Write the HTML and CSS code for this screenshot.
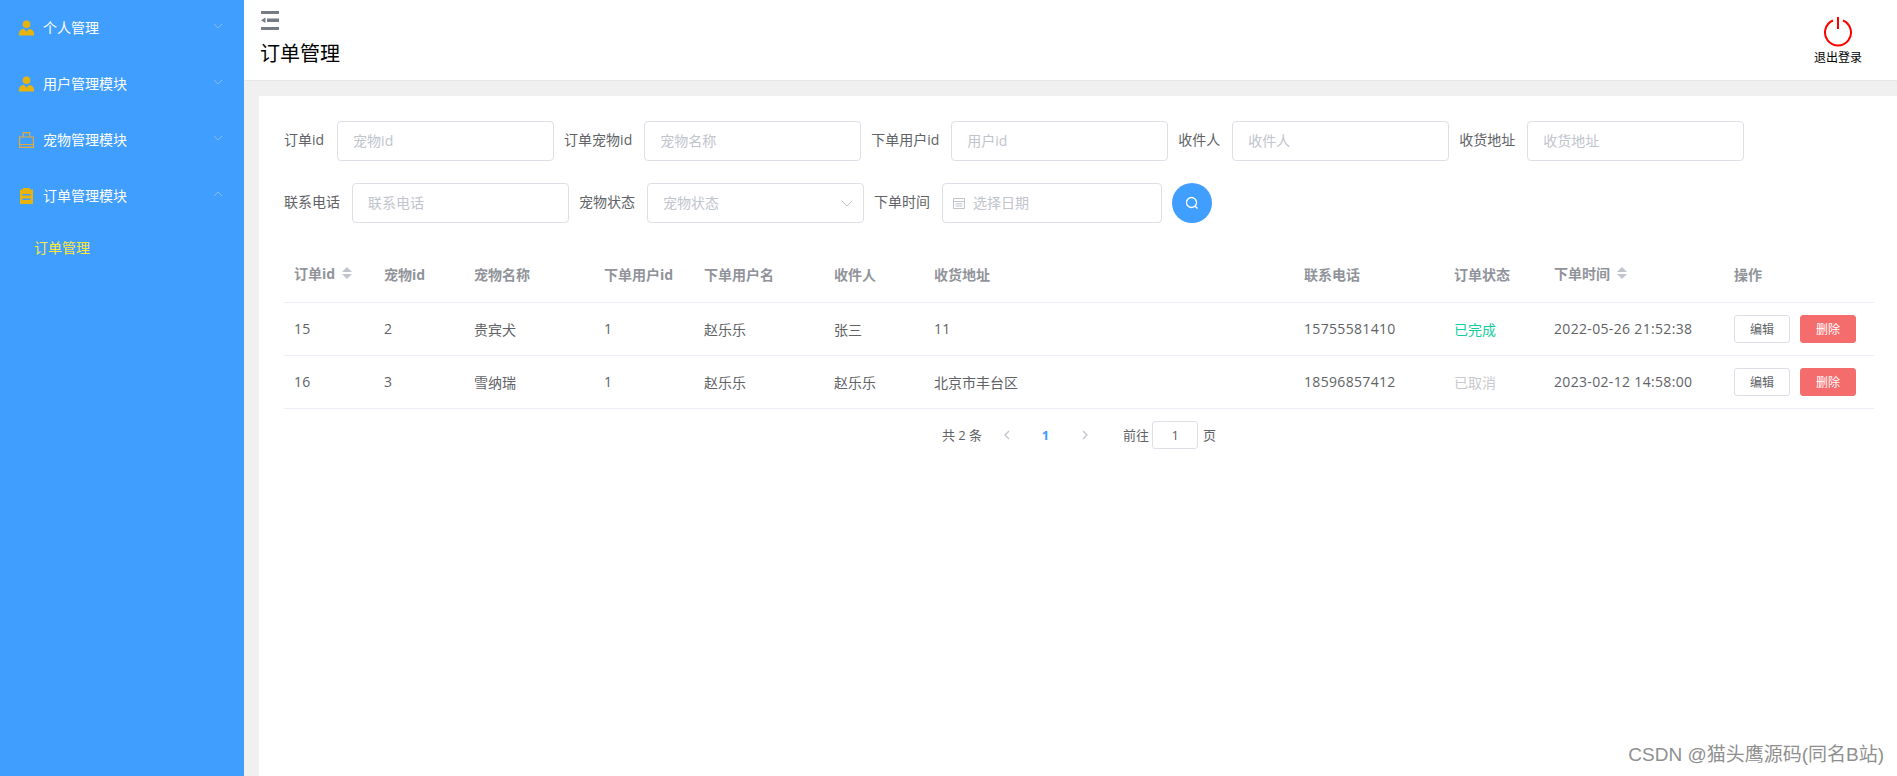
FILE: index.html
```html
<!DOCTYPE html>
<html lang="zh-CN">
<head>
<meta charset="utf-8">
<title>订单管理</title>
<link rel="stylesheet" href="styles.css">
</head>
<body>
<div class="app">
  <aside class="sidebar">
    <div class="menu-item">
      <svg class="menu-icon" viewBox="0 0 15 15"><circle cx="7.5" cy="3.8" r="3.8"/><path d="M0 15v-2.5C0 10 2.5 8.7 4.6 8.2L7.5 11l2.9-2.8c2.100.5 4.600 1.800 4.600 4.300V15z"/></svg>
      <span class="menu-text">个人管理</span>
      <svg class="menu-arrow" viewBox="0 0 10 6"><path d="M1 1l4 4 4-4"/></svg>
    </div>
    <div class="menu-item">
      <svg class="menu-icon" viewBox="0 0 15 15"><circle cx="7.5" cy="3.8" r="3.8"/><path d="M0 15v-2.500C0 10 2.500 8.700 4.600 8.200L7.500 11l2.900-2.800c2.100.5 4.600 1.800 4.600 4.300V15z"/></svg>
      <span class="menu-text">用户管理模块</span>
      <svg class="menu-arrow" viewBox="0 0 10 6"><path d="M1 1l4 4 4-4"/></svg>
    </div>
    <div class="menu-item">
      <svg class="menu-icon menu-icon-line" viewBox="0 0 15 16"><path d="M.6 5h13.800v10.400H.6zM.6 12.500h13.800M4.300 5V.6h6.400V5"/></svg>
      <span class="menu-text">宠物管理模块</span>
      <svg class="menu-arrow" viewBox="0 0 10 6"><path d="M1 1l4 4 4-4"/></svg>
    </div>
    <div class="menu-item">
      <svg class="menu-icon" viewBox="0 0 15 16"><path fill-rule="evenodd" d="M1 1.500h3V0h7v1.500h3V16H1zM3.500 6v1.500h8V6zm0 4.500V12h8v-1.500z"/></svg>
      <span class="menu-text">订单管理模块</span>
      <svg class="menu-arrow" viewBox="0 0 10 6"><path d="M1 5l4-4 4 4"/></svg>
    </div>
    <div class="submenu-item">订单管理</div>
  </aside>
  <div class="content">
    <header class="topbar">
      <div class="topbar-left">
        <svg class="collapse-icon" viewBox="0 0 18 19"><path d="M0 0h18v3H0zM6 7.500h12v3.500H6zM0 16h18v3H0zM4.500 6.500v5.500L0 9.300z"/></svg>
        <h1 class="page-title">订单管理</h1>
      </div>
      <div class="logout">
        <svg class="power-icon" viewBox="0 0 30 31"><path d="M10 4.500A13 13 0 1 0 20 4.500M15 1v12"/></svg>
        <span>退出登录</span>
      </div>
    </header>
    <main class="main">
      <section class="card">
        <form class="filter">
          <div class="field"><label class="field-label label-id">订单id</label><div class="control"><span class="ph">宠物id</span></div></div>
          <div class="field"><label class="field-label">订单宠物id</label><div class="control"><span class="ph">宠物名称</span></div></div>
          <div class="field"><label class="field-label">下单用户id</label><div class="control"><span class="ph">用户id</span></div></div>
          <div class="field"><label class="field-label">收件人</label><div class="control"><span class="ph">收件人</span></div></div>
          <div class="field"><label class="field-label">收货地址</label><div class="control"><span class="ph">收货地址</span></div></div>
          <div class="field"><label class="field-label">联系电话</label><div class="control"><span class="ph">联系电话</span></div></div>
          <div class="field"><label class="field-label">宠物状态</label><div class="control control-select"><span class="ph">宠物状态</span><svg class="select-arrow" viewBox="0 0 12 7"><path d="M1 1l5 5 5-5"/></svg></div></div>
          <div class="field"><label class="field-label">下单时间</label><div class="control control-date"><svg class="date-icon" viewBox="0 0 12 12"><path d="M.5 1.500h11v10H.5zM.5 4.500h11M2.500 6.800h7M2.500 9h7"/></svg><span class="ph">选择日期</span></div></div>
          <div class="search-btn"><svg viewBox="0 0 14 14"><circle cx="6.500" cy="6.500" r="5"/><path d="M10.200 10.200L12.500 12.500"/></svg></div>
        </form>
        <table class="orders">
          <colgroup>
            <col class="c90"><col class="c90"><col class="c130"><col class="c100"><col class="c130"><col class="c100"><col class="c370"><col class="c150"><col class="c100"><col class="c180"><col class="c150">
          </colgroup>
          <thead>
            <tr>
              <th><div class="sort-head">订单id<span class="caret"><i class="up"></i><i class="down"></i></span></div></th>
              <th>宠物id</th><th>宠物名称</th><th>下单用户id</th><th>下单用户名</th><th>收件人</th><th>收货地址</th><th>联系电话</th><th>订单状态</th>
              <th><div class="sort-head">下单时间<span class="caret"><i class="up"></i><i class="down"></i></span></div></th>
              <th>操作</th>
            </tr>
          </thead>
          <tbody>
            <tr>
              <td class="num">15</td><td class="num">2</td><td>贵宾犬</td><td class="num">1</td><td>赵乐乐</td><td>张三</td><td class="num">11</td><td class="num">15755581410</td><td class="done">已完成</td><td class="num">2022-05-26 21:52:38</td>
              <td><div class="ops"><span class="btn">编辑</span><span class="btn btn-danger">删除</span></div></td>
            </tr>
            <tr>
              <td class="num">16</td><td class="num">3</td><td>雪纳瑞</td><td class="num">1</td><td>赵乐乐</td><td>赵乐乐</td><td>北京市丰台区</td><td class="num">18596857412</td><td class="cancel">已取消</td><td class="num">2023-02-12 14:58:00</td>
              <td><div class="ops"><span class="btn">编辑</span><span class="btn btn-danger">删除</span></div></td>
            </tr>
          </tbody>
        </table>
        <nav class="pager">
          <span class="total">共 2 条</span>
          <svg class="pg-arrow" viewBox="0 0 39 28"><path d="M22 10l-4 4 4 4"/></svg>
          <span class="pg-num">1</span>
          <svg class="pg-arrow" viewBox="0 0 39 28"><path d="M18 10l4 4-4 4"/></svg>
          <span class="jump">前往</span>
          <span class="jump-input">1</span>
          <span class="jump-end">页</span>
        </nav>
      </section>
    </main>
  </div>
</div>
<div class="watermark">CSDN @猫头鹰源码(同名B站)</div>
</body>
</html>
```

FILE: styles.css
```css
* { box-sizing: border-box; }
html, body { margin: 0; height: 100%; overflow: hidden; }
body {
  font-family: "Open Sans", "Noto Sans CJK SC", sans-serif;
  font-size: 14px;
  color: #606266;
  background: #fff;
}
.app { display: flex; height: 776px; }

.sidebar { width: 244px; flex: none; background: #409eff; }
.menu-item {
  display: flex;
  align-items: center;
  height: 56px;
  padding: 0 21px 0 19px;
  color: #fff;
}
.menu-icon { width: 15px; height: 16px; fill: #e6b30f; flex: none; }
.menu-icon-line { fill: none; stroke: #e0ab3c; stroke-width: 1.2; }
.menu-text { margin-left: 9px; padding-bottom: 2px; }
.menu-arrow { width: 10px; height: 6px; margin-left: auto; margin-top: -4px; fill: none; stroke: #84bdf7; stroke-width: 1; }
.submenu-item { height: 50px; line-height: 48px; padding-left: 34px; color: #ffe83b; }

.content { flex: 1; min-width: 0; display: flex; flex-direction: column; }
.topbar {
  height: 81px;
  flex: none;
  display: flex;
  justify-content: space-between;
  padding: 0 35px 0 16px;
  border-bottom: 1px solid #e6e6e6;
  background: #fff;
}
.topbar-left { display: flex; flex-direction: column; }
.collapse-icon { width: 18px; height: 19px; margin: 11px 0 0 1px; fill: #757c85; }
.page-title { margin: 10px 0 0; font-size: 20px; font-weight: 400; line-height: 28px; color: #000; }
.logout { display: flex; flex-direction: column; align-items: center; padding-top: 16px; font-size: 12px; color: #000; }
.power-icon { width: 30px; height: 31px; fill: none; stroke: #f00; stroke-width: 2; }
.logout span { line-height: 16px; margin-top: 3px; }

.main { flex: 1; background: #f0f0f0; padding: 15px 0 0 15px; min-height: 0; }
.card { height: 100%; background: #fff; padding: 25px 24px 0 25px; }

.filter { display: flex; flex-wrap: wrap; align-items: flex-start; }
.field { display: flex; align-items: center; margin: 0 10px 22px 0; }
.field-label { padding: 0 12px 2px 0; line-height: 38px; white-space: nowrap; }
.label-id { padding-right: 13px; }
.control {
  display: flex;
  align-items: center;
  width: 217px;
  height: 40px;
  padding: 0 15px;
  border: 1px solid #dcdfe6;
  border-radius: 4px;
  background: #fff;
}
.ph { color: #c0c4cc; padding-bottom: 2px; }
.control-select { justify-content: space-between; padding-right: 10px; }
.select-arrow { width: 12px; height: 7px; fill: none; stroke: #c0c4cc; stroke-width: 1; }
.control-date { width: 220px; padding-left: 10px; }
.date-icon { width: 12px; height: 12px; margin-right: 8px; fill: none; stroke: #c0c4cc; stroke-width: 1; }
.search-btn {
  display: flex;
  align-items: center;
  justify-content: center;
  width: 40px;
  height: 40px;
  border-radius: 50%;
  background: #409eff;
}
.search-btn svg { width: 14px; height: 14px; fill: none; stroke: #fff; stroke-width: 1.300; }

.orders { width: 1590px; table-layout: fixed; border-collapse: collapse; }
.c90 { width: 90px; }
.c100 { width: 100px; }
.c130 { width: 130px; }
.c150 { width: 150px; }
.c180 { width: 180px; }
.c370 { width: 370px; }
.orders th {
  height: 57px;
  padding: 2px 10px 0;
  text-align: left;
  font-weight: 700;
  color: #909399;
  border-bottom: 1px solid #ebeef5;
}
.orders td { height: 53px; padding: 0 10px; border-bottom: 1px solid #ebeef5; }
.num { letter-spacing: .33px; }
.sort-head { display: flex; align-items: center; padding-bottom: 2px; }
.caret { display: flex; flex-direction: column; gap: 2px; margin-left: 7px; }
.caret i { display: block; width: 0; height: 0; border-left: 5px solid transparent; border-right: 5px solid transparent; }
.caret .up { border-bottom: 5px solid #c0c4cc; }
.caret .down { border-top: 5px solid #c0c4cc; }
.done { color: #13ce9b; }
.cancel { color: #c8c9cc; }
.ops { display: flex; gap: 10px; }
.btn {
  display: flex;
  align-items: center;
  justify-content: center;
  width: 56px;
  height: 28px;
  font-size: 12px;
  border: 1px solid #dcdfe6;
  border-radius: 3px;
  background: #fff;
  flex: none;
}
.btn-danger { background: #f56c6c; border-color: #f56c6c; color: #fff; }

.pager { display: flex; align-items: center; justify-content: center; width: 1590px; height: 28px; margin-top: 12px; font-size: 13px; }
.total { margin-right: 5px; }
.pg-arrow { width: 39px; height: 28px; fill: none; stroke: #c0c4cc; stroke-width: 1.300; }
.pg-num { width: 39px; text-align: center; font-weight: 700; color: #409eff; }
.jump { margin-left: 19px; }
.jump-input {
  width: 46px;
  height: 28px;
  line-height: 26px;
  margin: 0 5px 0 3px;
  text-align: center;
  border: 1px solid #dcdfe6;
  border-radius: 3px;
}

.watermark {
  position: absolute;
  right: 13px;
  bottom: 8px;
  font-size: 19px;
  line-height: 26px;
  color: #8f8f8f;
  font-family: "Liberation Sans", "Noto Sans CJK SC", sans-serif;
  text-shadow: 0 0 1px #fff;
}
```
